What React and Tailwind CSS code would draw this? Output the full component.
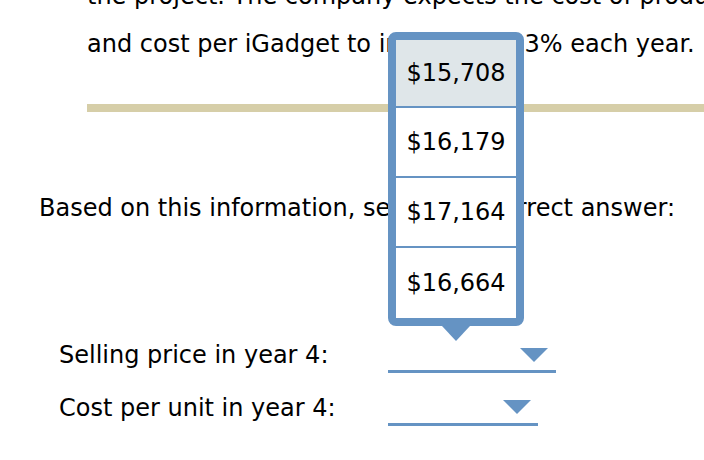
import React from "react";

const options = ["$15,708", "$16,179", "$17,164", "$16,664"];

function Caret() {
  return (
    <svg width="28" height="14" viewBox="0 0 28 14">
      <polygon points="0,0 28,0 14,14" fill="#6593c3" />
    </svg>
  );
}

function Select({ width, arrowTop, arrowRight }) {
  return (
    <div className={`relative h-[32px] border-b-[3px] border-[#6593c3] ${width}`}>
      <div className={`absolute ${arrowTop} ${arrowRight}`}>
        <Caret />
      </div>
    </div>
  );
}

export default function App() {
  return (
    <div
      className="relative w-[704px] h-[460px] overflow-hidden bg-white text-black text-[24px]"
      style={{ fontFamily: '"DejaVu Sans", Verdana, sans-serif' }}
    >
      <div className="mt-[-28px] pl-[87px] leading-[48px] whitespace-nowrap">
        <div>the project. The company expects the cost of production</div>
        <div>and cost per iGadget to increase by 3% each year.</div>
      </div>

      <div className="ml-[87px] mt-[36px] h-[8px] bg-[#d6cea8]" />

      <div className="mt-[72px] pl-[39px] leading-[48px] whitespace-nowrap">
        Based on this information, select the correct answer:
      </div>

      <div className="mt-[109px] pl-[59px] flex flex-col">
        <div className="flex items-start h-[53px]">
          <div className="w-[329px] leading-[28px]">Selling price in year 4:</div>
          <Select width="w-[168px]" arrowTop="top-[7px]" arrowRight="right-[8px]" />
        </div>
        <div className="flex items-start h-[53px]">
          <div className="w-[329px] leading-[28px]">Cost per unit in year 4:</div>
          <Select width="w-[150px]" arrowTop="top-[6px]" arrowRight="right-[7px]" />
        </div>
      </div>

      {/* open dropdown menu */}
      <div className="absolute left-[388px] top-[32px] w-[136px]">
        <div className="border-[8px] border-[#6593c3] rounded-[8px] bg-white overflow-hidden">
          <div className="flex flex-col divide-y-2 divide-[#6593c3]">
            {options.map((o, i) => (
              <div
                key={o}
                className={`flex items-center justify-center leading-[28px] ${
                  i === 0 ? "h-[68px] bg-[#dfe6e9]" : "h-[70px] bg-white"
                }`}
              >
                {o}
              </div>
            ))}
          </div>
        </div>
        <div className="flex justify-center">
          <svg width="28" height="15" viewBox="0 0 28 15">
            <polygon points="0,0 28,0 14,15" fill="#6593c3" />
          </svg>
        </div>
      </div>
    </div>
  );
}
